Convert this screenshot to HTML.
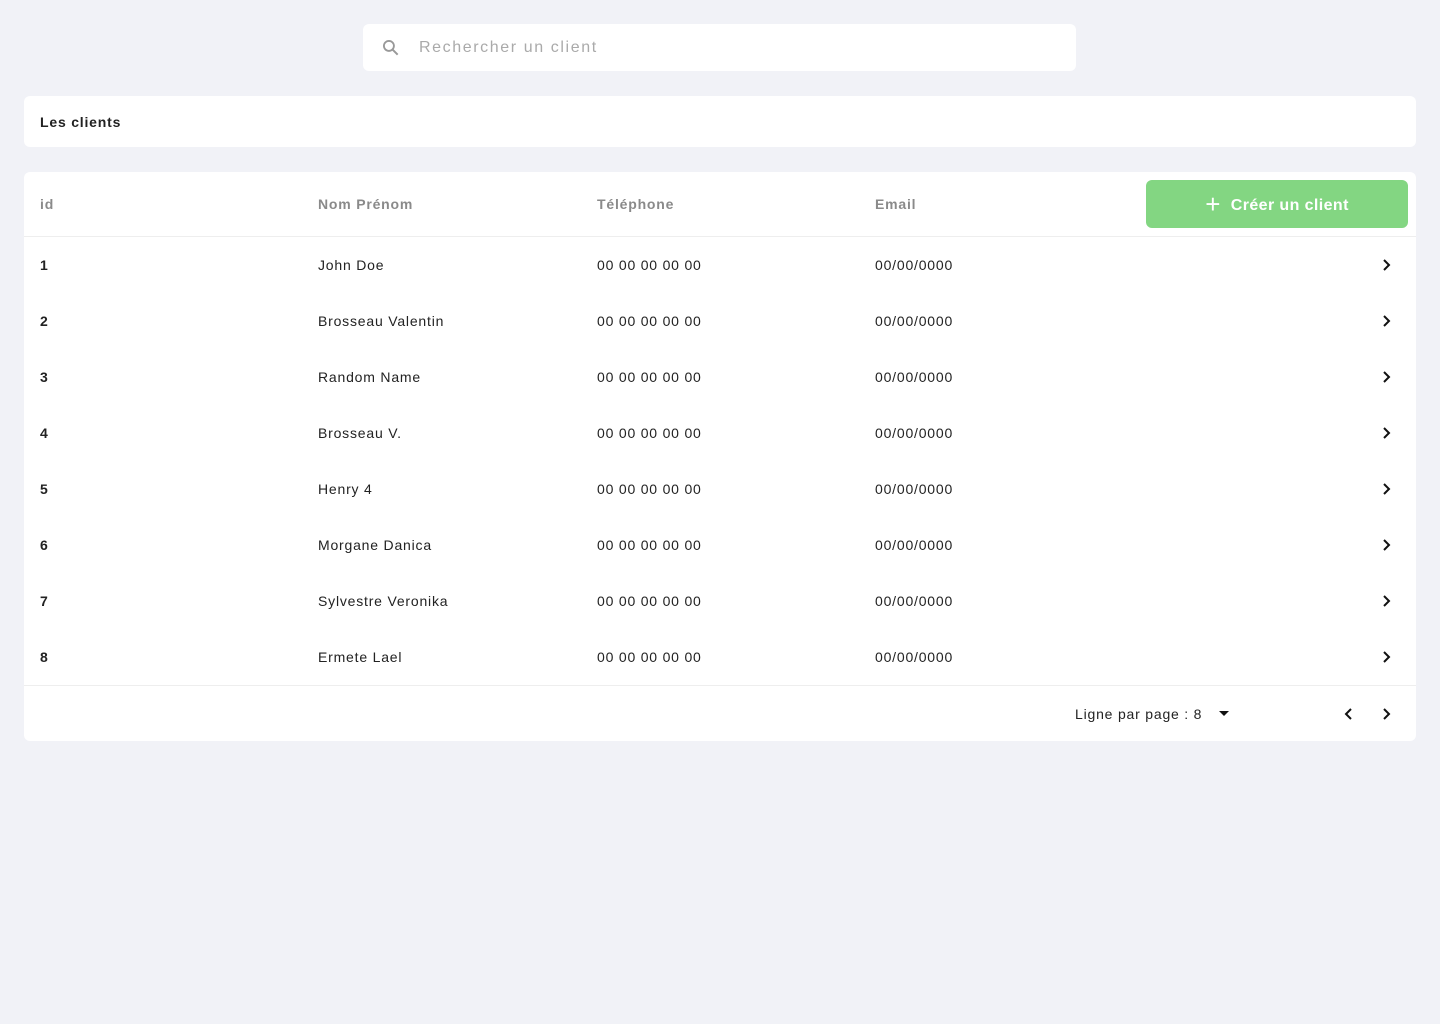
<!DOCTYPE html>
<html><head><meta charset="utf-8"><style>
*{box-sizing:border-box;margin:0;padding:0}
body{width:1440px;height:1024px;background:#f1f2f7;font-family:"Liberation Sans",sans-serif;color:#222;position:relative;letter-spacing:0.8px}
.search{position:absolute;left:363px;top:24px;width:713px;height:47px;background:#fff;border-radius:6px}
.search span{position:absolute;left:56px;top:15px;font-size:16px;color:#aaa;letter-spacing:1.6px}
.title{position:absolute;left:24px;top:96px;width:1392px;height:51px;background:#fff;border-radius:6px;font-size:14px;font-weight:bold;padding:18px 16px;color:#222}
.card{position:absolute;left:24px;top:172px;width:1392px;height:569px;background:#fff;border-radius:6px}
.hdr{height:65px;border-bottom:1px solid #eee;position:relative;font-size:14px;font-weight:bold;color:#8a8a8a}
.c{position:absolute}
.hdr .c{top:24px}
.btn{position:absolute;left:1122px;top:8px;width:262px;height:48px;background:#83d682;border-radius:6px;color:#fff;font-size:16px;font-weight:bold;text-align:center;line-height:48px;letter-spacing:0.4px}
.row{height:56px;position:relative;font-size:14px}
.row .c{top:20px}
.row b{font-weight:bold}
.chev{position:absolute;left:1356px;top:21px}
.foot{position:absolute;top:513px;left:0;width:100%;height:56px;border-top:1px solid #eee;font-size:14px}
</style></head><body>
<div class="search"><svg style="position:absolute;left:18px;top:14px" width="20" height="20" viewBox="0 0 24 24"><circle cx="9.5" cy="9.5" r="6" fill="none" stroke="#999" stroke-width="2.2"/><path d="M14 14l6 6" stroke="#999" stroke-width="2.4"/></svg><span>Rechercher un client</span></div>
<div class="title">Les clients</div>
<div class="card">
<div class="hdr"><div class="c" style="left:16px">id</div><div class="c" style="left:294px">Nom Prénom</div><div class="c" style="left:573px">Téléphone</div><div class="c" style="left:851px">Email</div>
<div class="btn"><span style="font-size:26px;font-weight:normal;vertical-align:-3px;margin-right:10px">+</span>Créer un client</div></div>
<div class="row"><b class="c" style="left:16px">1</b><div class="c" style="left:294px">John Doe</div><div class="c" style="left:573px">00 00 00 00 00</div><div class="c" style="left:851px">00/00/0000</div><svg class="chev" width="14" height="14" viewBox="0 0 14 14"><path d="M4 2l5 5-5 5" fill="none" stroke="#111" stroke-width="2"/></svg></div>
<div class="row"><b class="c" style="left:16px">2</b><div class="c" style="left:294px">Brosseau Valentin</div><div class="c" style="left:573px">00 00 00 00 00</div><div class="c" style="left:851px">00/00/0000</div><svg class="chev" width="14" height="14" viewBox="0 0 14 14"><path d="M4 2l5 5-5 5" fill="none" stroke="#111" stroke-width="2"/></svg></div>
<div class="row"><b class="c" style="left:16px">3</b><div class="c" style="left:294px">Random Name</div><div class="c" style="left:573px">00 00 00 00 00</div><div class="c" style="left:851px">00/00/0000</div><svg class="chev" width="14" height="14" viewBox="0 0 14 14"><path d="M4 2l5 5-5 5" fill="none" stroke="#111" stroke-width="2"/></svg></div>
<div class="row"><b class="c" style="left:16px">4</b><div class="c" style="left:294px">Brosseau V.</div><div class="c" style="left:573px">00 00 00 00 00</div><div class="c" style="left:851px">00/00/0000</div><svg class="chev" width="14" height="14" viewBox="0 0 14 14"><path d="M4 2l5 5-5 5" fill="none" stroke="#111" stroke-width="2"/></svg></div>
<div class="row"><b class="c" style="left:16px">5</b><div class="c" style="left:294px">Henry 4</div><div class="c" style="left:573px">00 00 00 00 00</div><div class="c" style="left:851px">00/00/0000</div><svg class="chev" width="14" height="14" viewBox="0 0 14 14"><path d="M4 2l5 5-5 5" fill="none" stroke="#111" stroke-width="2"/></svg></div>
<div class="row"><b class="c" style="left:16px">6</b><div class="c" style="left:294px">Morgane Danica</div><div class="c" style="left:573px">00 00 00 00 00</div><div class="c" style="left:851px">00/00/0000</div><svg class="chev" width="14" height="14" viewBox="0 0 14 14"><path d="M4 2l5 5-5 5" fill="none" stroke="#111" stroke-width="2"/></svg></div>
<div class="row"><b class="c" style="left:16px">7</b><div class="c" style="left:294px">Sylvestre Veronika</div><div class="c" style="left:573px">00 00 00 00 00</div><div class="c" style="left:851px">00/00/0000</div><svg class="chev" width="14" height="14" viewBox="0 0 14 14"><path d="M4 2l5 5-5 5" fill="none" stroke="#111" stroke-width="2"/></svg></div>
<div class="row"><b class="c" style="left:16px">8</b><div class="c" style="left:294px">Ermete Lael</div><div class="c" style="left:573px">00 00 00 00 00</div><div class="c" style="left:851px">00/00/0000</div><svg class="chev" width="14" height="14" viewBox="0 0 14 14"><path d="M4 2l5 5-5 5" fill="none" stroke="#111" stroke-width="2"/></svg></div>
<div class="foot">
<div class="c" style="left:1051px;top:20px">Ligne par page : 8</div>
<svg class="c" style="left:1194px;top:24px" width="12" height="8" viewBox="0 0 12 8"><path d="M1 1h10L6 6z" fill="#111"/></svg>
<svg class="c" style="left:1317px;top:21px" width="14" height="14" viewBox="0 0 14 14"><path d="M10 2L5 7l5 5" fill="none" stroke="#111" stroke-width="2"/></svg>
<svg class="c" style="left:1356px;top:21px" width="14" height="14" viewBox="0 0 14 14"><path d="M4 2l5 5-5 5" fill="none" stroke="#111" stroke-width="2"/></svg>
</div>
</div>
</body></html>
